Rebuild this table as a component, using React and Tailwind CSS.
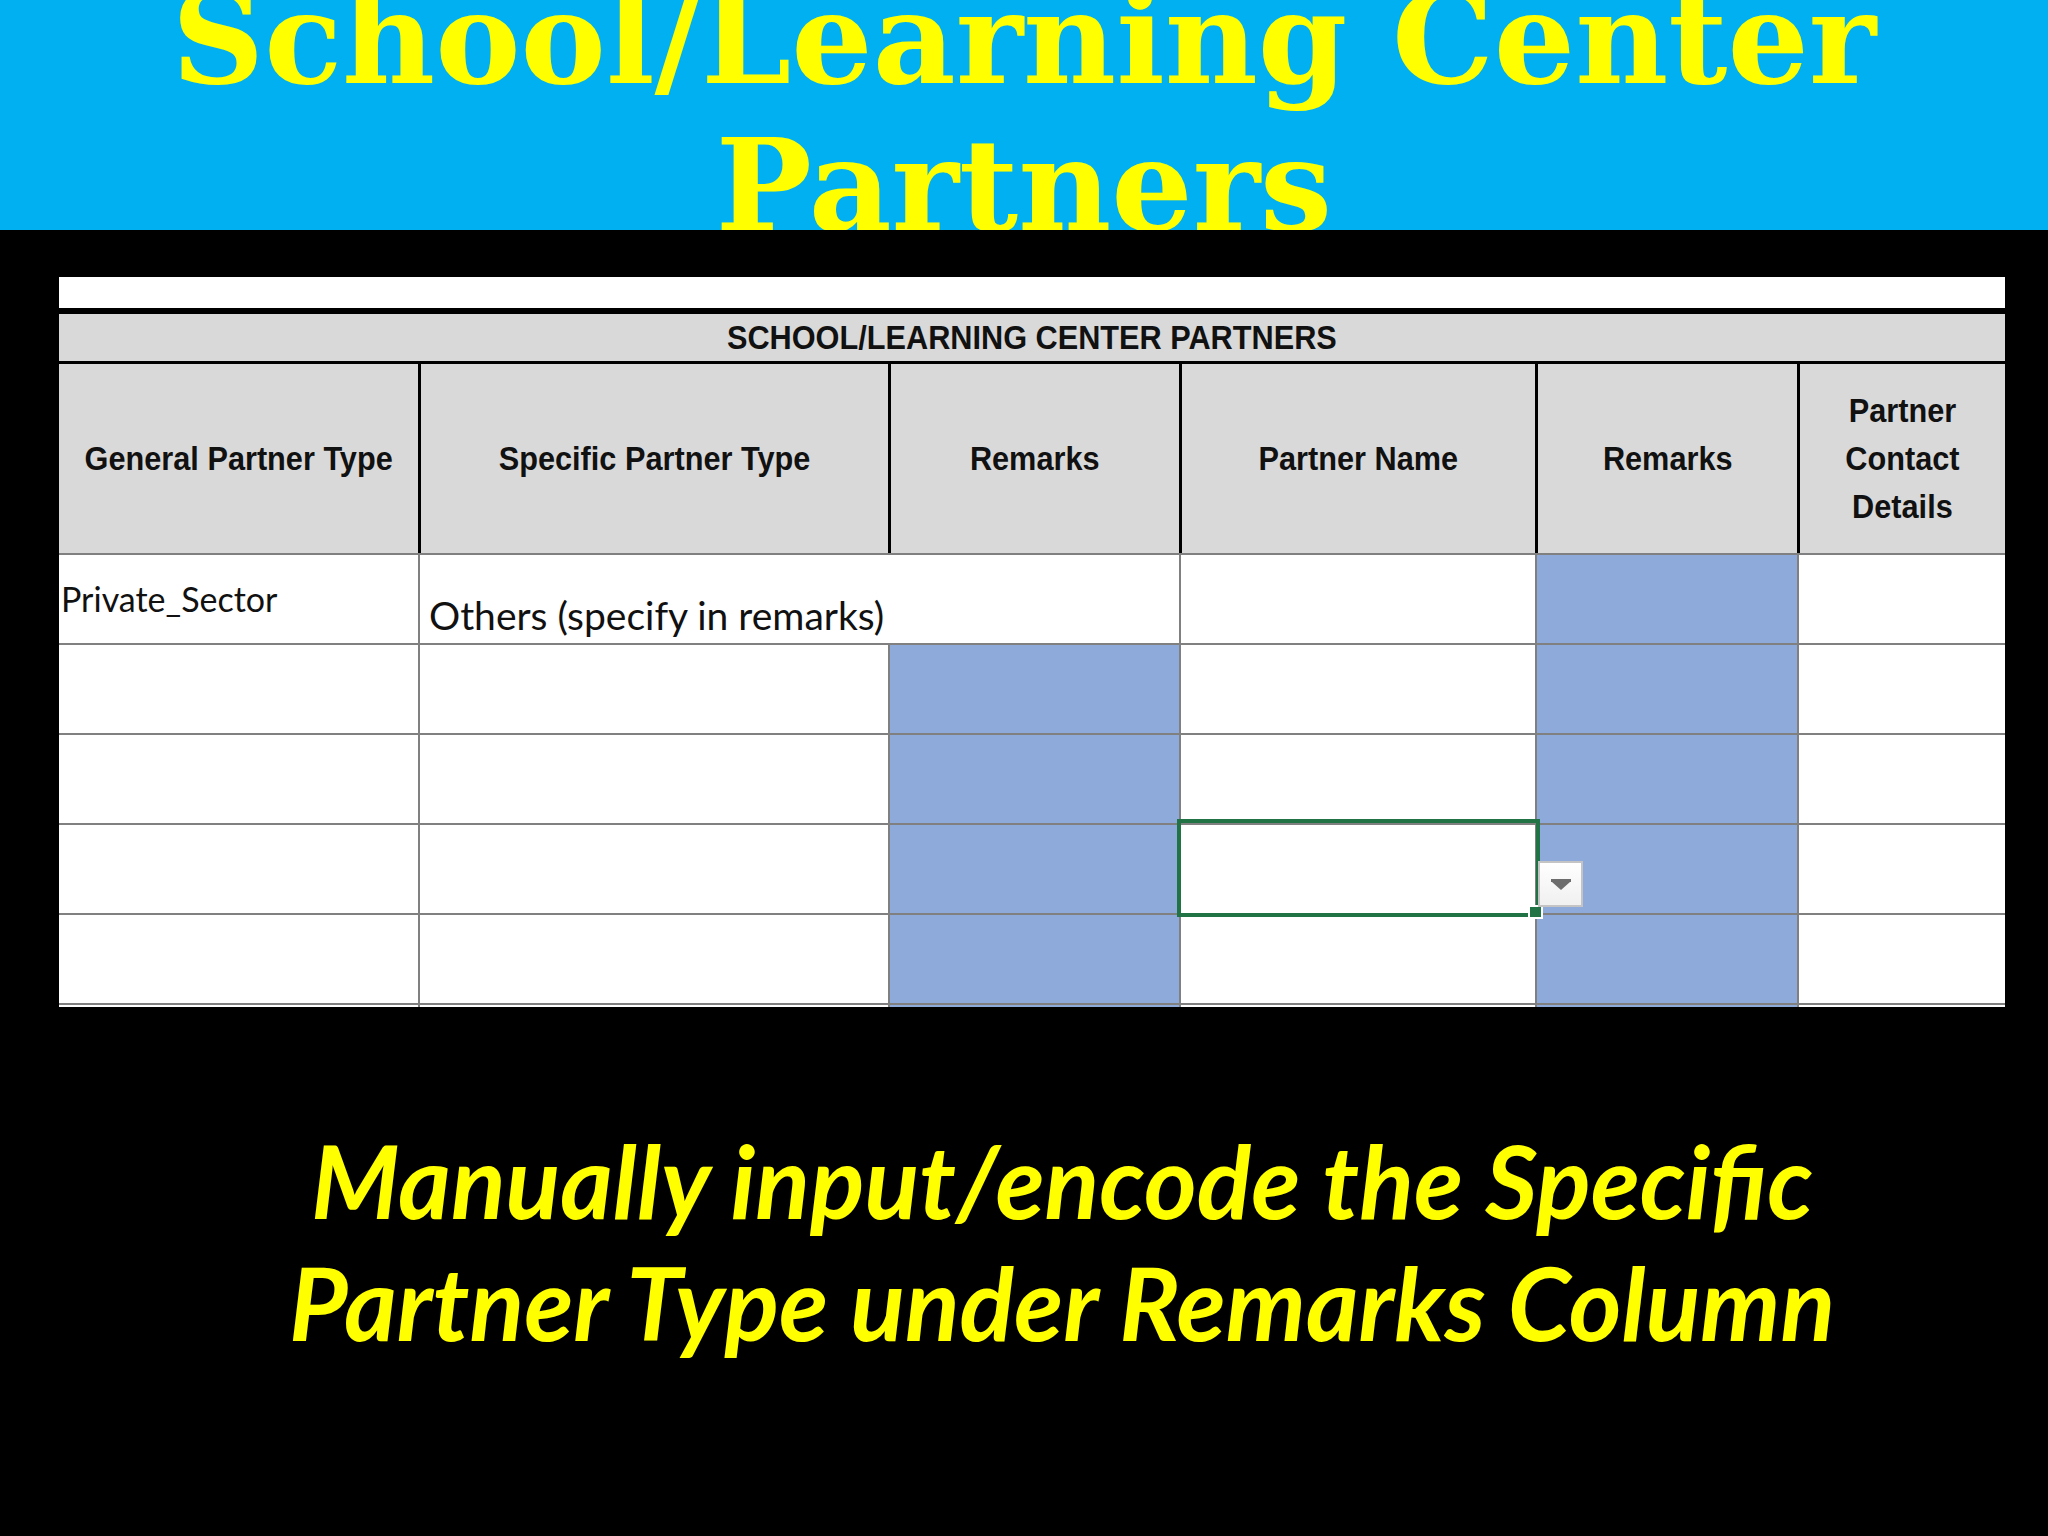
const narrow = "font-['Liberation_Sans',sans-serif] font-bold"
const squeeze = 'inline-block scale-x-[0.93] whitespace-nowrap'
const cols = 'grid grid-cols-[359px_470px_291px_356px_262px_208px]'
const blue = 'bg-[#8eaadb]'
const line = 'border-[#808080]'

const headers = [
  'General Partner Type',
  'Specific Partner Type',
  'Remarks',
  'Partner Name',
  'Remarks',
  'Partner Contact Details',
]

function DropdownButton() {
  return (
    <div className="absolute left-[357px] top-[36px] w-[45px] h-[46px] z-20 border-2 border-[#c4c4c4] bg-gradient-to-b from-white to-[#f0f0f0] flex items-center justify-center">
      <svg width="20" height="11" viewBox="0 0 20 11">
        <rect x="0" y="0" width="20" height="3" fill="#6d6d6d" />
        <path d="M1 3 L19 3 L10 11 Z" fill="#6d6d6d" />
      </svg>
    </div>
  )
}

function Selection() {
  return (
    <>
      <div className="absolute -left-[4px] -top-[6px] w-[363px] h-[98px] border-4 border-[#217346] z-10" />
      <div className="absolute left-[347px] top-[80px] w-[15px] h-[14px] border-2 border-white bg-[#217346] z-10" />
      <DropdownButton />
    </>
  )
}

function BodyRow({ first, selected, strip }) {
  const h = strip ? 'h-[4px]' : 'h-[90px]'
  const cell = `border-l-2 ${line}`
  if (first) {
    return (
      <div className={`${cols} ${h} border-t-2 ${line} bg-white`}>
        <div className="pl-[2px] pt-[27px] font-['Lato',sans-serif] text-[34px] leading-none text-[#111]">Private_Sector</div>
        <div className={`${cell} col-span-2 pl-[9px] pt-[41px] font-['Lato',sans-serif] text-[39px] leading-none text-[#111] whitespace-nowrap`}>
          Others (specify in remarks)
        </div>
        <div className={cell} />
        <div className={`${cell} ${blue}`} />
        <div className={cell} />
      </div>
    )
  }
  return (
    <div className={`${cols} ${h} border-t-2 ${line} bg-white`}>
      <div />
      <div className={cell} />
      <div className={`${cell} ${blue}`} />
      <div className={`${cell} relative`}>{selected && <Selection />}</div>
      <div className={`${cell} ${blue}`} />
      <div className={cell} />
    </div>
  )
}

export default function App() {
  return (
    <div className="w-[2048px] h-[1536px] bg-black overflow-hidden">
      <header className="h-[230px] bg-[#00b0f0] overflow-hidden">
        <h1 className="-mt-[35px] text-center font-['DejaVu_Serif',serif] font-bold text-[128px] leading-[147px] text-[#ffff00]">
          School/Learning Center
          <br />
          Partners
        </h1>
      </header>

      <div className="mt-[47px] ml-[59px] w-[1946px]">
        <div className="h-[31px] bg-white" />
        <div className={`h-[56px] border-t-[6px] border-b-[3px] border-black bg-[#d9d9d9] flex items-center justify-center ${narrow} text-[33px] text-[#111]`}>
          <span className={squeeze}>SCHOOL/LEARNING CENTER PARTNERS</span>
        </div>
        <div className={`${cols} h-[189px] bg-[#d9d9d9]`}>
          {headers.map((t, i) => (
            <div
              key={i}
              className={`flex items-center justify-center text-center ${narrow} text-[33px] leading-[48px] text-[#111] ${i > 0 ? 'border-l-[3px] border-black' : ''}`}
            >
              {i === 5 ? (
                <span className={squeeze}>Partner<br />Contact<br />Details</span>
              ) : (
                <span className={squeeze}>{t}</span>
              )}
            </div>
          ))}
        </div>
        <BodyRow first />
        <BodyRow />
        <BodyRow />
        <BodyRow selected />
        <BodyRow />
        <BodyRow strip />
      </div>

      <div className="mt-[112px] pl-[76px] text-center font-['Lato',sans-serif] font-bold italic text-[101px] leading-[122px] text-[#ffff00]">
        Manually input/encode the Specific
        <br />
        Partner Type under Remarks Column
      </div>
    </div>
  )
}
